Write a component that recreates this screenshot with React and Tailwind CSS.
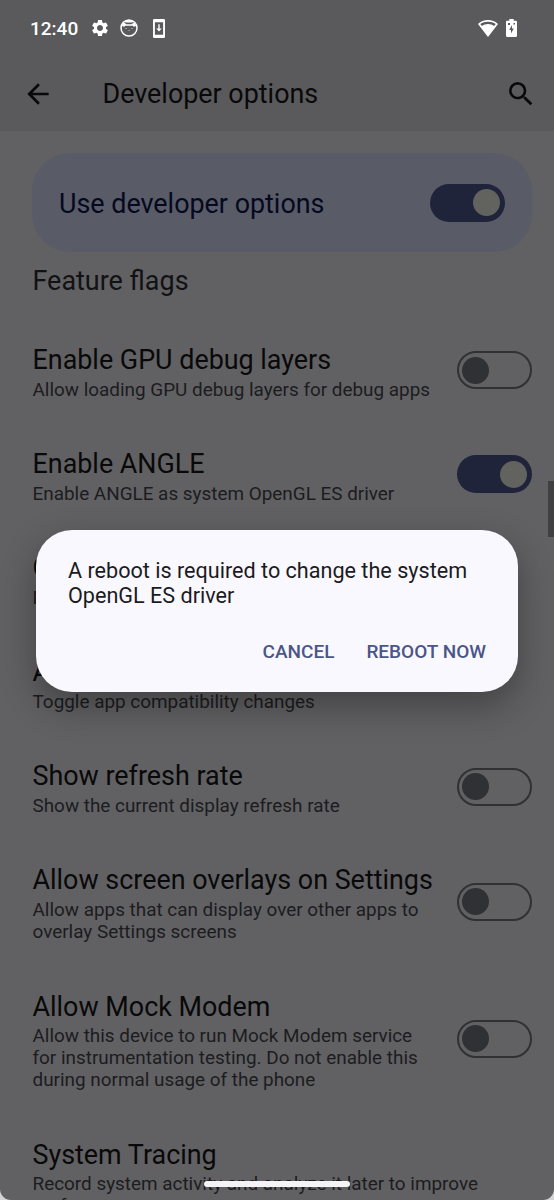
import clsx from 'clsx'
import { MdArrowBack, MdSearch, MdSettings } from 'react-icons/md'

const OPTIONS = [
  { title: 'Enable GPU debug layers', summary: ['Allow loading GPU debug layers for debug apps'], on: false },
  { title: 'Enable ANGLE', summary: ['Enable ANGLE as system OpenGL ES driver'], on: true },
  { title: 'Graphics Driver Preferences', summary: ['Modify graphics driver settings'] },
  { title: 'App Compatibility Changes', summary: ['Toggle app compatibility changes'] },
  { title: 'Show refresh rate', summary: ['Show the current display refresh rate'], on: false },
  {
    title: 'Allow screen overlays on Settings',
    summary: ['Allow apps that can display over other apps to', 'overlay Settings screens'],
    on: false,
  },
  {
    title: 'Allow Mock Modem',
    summary: [
      'Allow this device to run Mock Modem service',
      'for instrumentation testing. Do not enable this',
      'during normal usage of the phone',
    ],
    on: false,
  },
  { title: 'System Tracing', summary: ['Record system activity and analyze it later to improve', 'performance'] },
]

function Switch({ on }) {
  return (
    <span
      className={clsx(
        'flex h-[38px] w-[75px] shrink-0 items-center rounded-full',
        on ? 'justify-end bg-[#1f243b] pr-[5px]' : 'border-[2.5px] border-[#303134] pl-[3px]'
      )}
    >
      <span className={clsx('size-[27px] rounded-full', on ? 'bg-[#62625f]' : 'bg-[#303134]')} />
    </span>
  )
}

function StatusBar() {
  return (
    <div className="flex h-[56px] items-center pr-[37px] pl-[30px] text-white">
      <span className="w-[60px] text-[19px] leading-none font-medium">12:40</span>
      <MdSettings className="size-[20px]" />
      <svg className="ml-[10px] size-[18px]" viewBox="0 0 18 18" fill="none">
        <circle cx="9" cy="9" r="8" stroke="currentColor" strokeWidth="1.5" />
        <path d="M1.800 7 3.500 3.300 6.500 5.200h5l3-1.900L16.200 7l-2.500.8-1-1H5.300l-1 1z" fill="currentColor" />
        <path d="M3.800 2.800C6.500.5 11.500.5 14.200 2.800L12 3.600H6z" fill="currentColor" />
        <path d="M5.500 9.500h1.200M11.300 9.500h1.200M8.500 11.500h1" stroke="currentColor" strokeOpacity="0.6" />
      </svg>
      <svg className="ml-[15px] h-[19px] w-[12px]" viewBox="0 0 12 19">
        <path
          fill="currentColor"
          fillRule="evenodd"
          d="M1.2 0h9.6A1.2 1.2 0 0 1 12 1.2v16.6a1.2 1.2 0 0 1-1.2 1.2H1.2A1.2 1.2 0 0 1 0 17.8V1.2A1.2 1.2 0 0 1 1.2 0zM1.9 3.3v12.4h8.2V3.3zM5.300 5.300h1.400v4.300h2.100L6 12.600 3.200 9.600h2.100z"
        />
      </svg>
      <svg className="ml-auto h-[17px] w-[20px]" viewBox="0 0 20 17">
        <path
          fill="currentColor"
          fillRule="evenodd"
          d="M10 0c4 0 7.400 1.500 10 3.900L10 17 0 3.900C2.600 1.500 6 0 10 0zM2.300 4.100l1.500 2C5.500 4.700 7.600 3.900 10 3.900s4.500.8 6.200 2.200l1.500-2C15.500 2.500 12.900 1.700 10 1.700s-5.500.8-7.700 2.400z"
        />
      </svg>
      <svg className="ml-[8px] h-[18px] w-[11px]" viewBox="0 0 11 18">
        <path
          fill="currentColor"
          fillRule="evenodd"
          d="M3.300 0h4.400v1.700h2.100c.7 0 1.200.5 1.200 1.200v13.900c0 .7-.5 1.200-1.200 1.200H1.200C.5 18 0 17.500 0 16.800V2.900c0-.7.500-1.200 1.200-1.200h2.100zM6 6 3.200 11h1.800v3.500L7.800 9.500H6zM2 4v2h2V4zM7.500 4v1.500H9V4z"
        />
      </svg>
    </div>
  )
}

function Option({ title, summary, on }) {
  return (
    <div className="flex items-center justify-between pt-[21px] pr-[22px] pb-[22.5px] pl-[32.5px]">
      <div className="whitespace-nowrap">
        <div className="h-[38.6px] text-[26.9px] leading-[40.4px] text-[#09090a]">{title}</div>
        {summary.map(line => (
          <div key={line} className="text-[18.9px] leading-[22px] text-[#1c1c1f]">{line}</div>
        ))}
      </div>
      {on !== undefined && <Switch on={on} />}
    </div>
  )
}

function RebootDialog() {
  return (
    <div
      role="dialog"
      className="absolute top-[530px] left-[36px] flex h-[162px] w-[482px] flex-col rounded-[36px] bg-[#faf8ff] px-[32px] pt-[28px] shadow-[0_14px_36px_rgba(0,0,0,0.32)]"
    >
      <p className="text-[21.6px] leading-[25px] whitespace-nowrap text-[#1b1b20]">
        A reboot is required to change the system
        <br />
        OpenGL ES driver
      </p>
      <div className="mt-[33px] flex justify-end gap-[32px] text-[19px] leading-[22px] font-medium text-[#4a5688]">
        <button>CANCEL</button>
        <button>REBOOT NOW</button>
      </div>
    </div>
  )
}

export default function App() {
  return (
    <div className="w-[554px] bg-[#d4d4d6]">
      <div className="relative h-[1200px] w-[554px] overflow-hidden rounded-b-[11px] bg-[#616163] font-[Roboto,sans-serif]">
        <header className="h-[131px] bg-[#5a5a5c]">
          <StatusBar />
          <div className="flex h-[75px] items-center pr-[17px] pl-[22px] text-[#09090a]">
            <MdArrowBack className="size-[32px]" />
            <h1 className="mt-px ml-[48.5px] text-[26.9px]">Developer options</h1>
            <MdSearch className="ml-auto size-[32px]" />
          </div>
        </header>

        <div className="mt-[22px] mr-[22px] ml-[32px] flex h-[99px] items-center justify-between rounded-[38px] bg-[#595b67] pr-[27px] pl-[27px]">
          <span className="mt-[3px] text-[26.9px] text-[#050920]">Use developer options</span>
          <Switch on />
        </div>

        <div className="h-[67px] pt-[9px] pl-[32.5px] text-[26.95px] leading-[40px] text-[#121214]">Feature flags</div>
        {OPTIONS.map(o => (
          <Option key={o.title} {...o} />
        ))}

        <div className="absolute top-[481px] right-0 h-[56px] w-[6px] bg-[#404042]" />
        <RebootDialog />
        <div className="absolute top-[1181px] left-[204px] h-[6px] w-[146px] rounded-full bg-[#f4f4f6]" />
      </div>
    </div>
  )
}
